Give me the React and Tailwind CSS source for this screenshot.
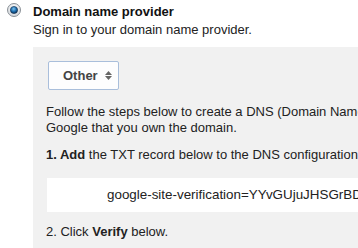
import React from 'react';

const Radio = () => (
  <svg width="14" height="14" viewBox="0 0 14 14" className="shrink-0">
    <defs>
      <radialGradient id="ring" cx="50%" cy="35%" r="60%">
        <stop offset="0%" stopColor="#ffffff" />
        <stop offset="100%" stopColor="#d4d8dd" />
      </radialGradient>
      <radialGradient id="dot" cx="45%" cy="35%" r="65%">
        <stop offset="0%" stopColor="#7fc3ee" />
        <stop offset="55%" stopColor="#1d6fb0" />
        <stop offset="100%" stopColor="#0b2f55" />
      </radialGradient>
    </defs>
    <circle cx="7" cy="7" r="6.5" fill="url(#ring)" stroke="#8a9097" />
    <circle cx="7" cy="7" r="3.6" fill="url(#dot)" stroke="#0d2a4a" strokeWidth="0.6" />
  </svg>
);

const App = () => {
  return (
    <div
      className="w-[358px] h-[248px] overflow-hidden bg-white text-[13px] text-[#222] leading-[16px]"
      style={{ fontFamily: '"Liberation Sans", Arial, sans-serif' }}
    >
      <div className="flex items-start gap-[12px] pl-[7px] pt-[3px]">
        <Radio />
        <div className="flex-1 min-w-0 mt-[1px]">
          <div className="font-bold text-[#111] whitespace-nowrap">Domain name provider</div>
          <div className="mt-[2px] whitespace-nowrap">Sign in to your domain name provider.</div>

          {/* Provider panel */}
          <div className="mt-[9px] bg-[#f1f1f1] pl-[13px] pt-[14px] pb-[20px] whitespace-nowrap">
            <button className="ml-[2px] flex items-center justify-between h-[29px] w-[71px] pl-[14px] pr-[6px] border border-[#a9bedb] rounded-[2px] bg-[#fdfdfe] text-[#444] font-bold text-[13px]">
              Other
              <svg width="7" height="9" viewBox="0 0 7 9">
                <path d="M3.5 0 L7 4 L0 4 Z" fill="#666" />
                <path d="M3.5 9 L7 5 L0 5 Z" fill="#666" />
              </svg>
            </button>

            <p className="mt-[14px]">
              Follow the steps below to create a DNS (Domain Name System) record that proves to
            </p>
            <p>Google that you own the domain.</p>

            <p className="mt-[11px]">
              <b>1. Add</b> the TXT record below to the DNS configuration for your domain.
            </p>

            <div className="ml-[1px] mt-[15px] h-[34px] bg-white flex items-center pl-[60px] text-[13.4px] text-[#222]">
              google-site-verification=YYvGUjuJHSGrBDqbK7ZvL0dWkMJhPpSx
            </div>

            <p className="mt-[12px]">
              2. Click <b>Verify</b> below.
            </p>
          </div>
        </div>
      </div>
    </div>
  );
};

export default App;
